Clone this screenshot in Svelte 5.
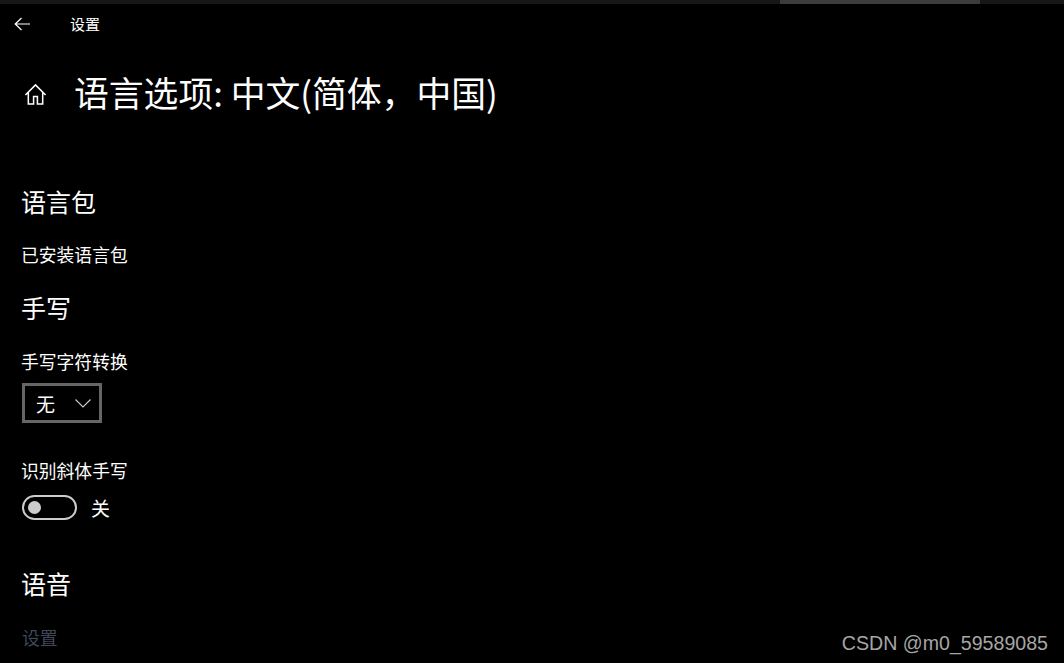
<script>
  let handwritingOn = false;
</script>

<div class="page">
  <div class="scrollbar"><div class="thumb"></div></div>

  <header class="titlebar">
    <svg class="back" viewBox="0 0 16 14" aria-hidden="true">
      <path d="M7.5 1 1.2 7l6.3 6M1.2 7H16" />
    </svg>
    <span class="app-name">设置</span>
  </header>

  <div class="page-head">
    <svg class="home" viewBox="0 0 24 24" aria-hidden="true">
      <path d="M1.5 12.5 12 2l10.5 10.5M4.5 10v12h5.5v-8h4v8h5.5V10" />
    </svg>
    <h1>语言选项: 中文(简体，中国)</h1>
  </div>

  <main class="content">
    <section class="pack">
      <h2>语言包</h2>
      <p class="label">已安装语言包</p>
    </section>

    <section class="handwriting">
      <h2>手写</h2>
      <p class="label">手写字符转换</p>
      <div class="select">
        <span>无</span>
        <svg class="chevron" viewBox="0 0 16 9" aria-hidden="true">
          <polyline points="0.5,0.5 8,8 15.5,0.5" />
        </svg>
      </div>
      <p class="label italic-label">识别斜体手写</p>
      <div class="toggle-row">
        <div class="toggle" class:on={handwritingOn}><div class="knob"></div></div>
        <span>关</span>
      </div>
    </section>

    <section class="speech">
      <h2>语音</h2>
      <p class="label link">设置</p>
    </section>
  </main>

  <div class="watermark">CSDN @m0_59589085</div>
</div>

<style>
  :global(body) {
    margin: 0;
    background: #000;
  }

  .page {
    position: relative;
    height: 663px;
    overflow: hidden;
    background: #000;
    color: #fff;
    font-family: "Noto Sans CJK SC", "Liberation Sans", sans-serif;
  }

  .scrollbar {
    height: 4px;
    background: #171717;
    display: flex;
    padding-left: 780px;
  }
  .thumb {
    width: 200px;
    background: #3c3c3c;
  }

  .titlebar {
    display: flex;
    align-items: center;
    height: 40px;
    padding-left: 14px;
  }
  .back {
    width: 16px;
    height: 14px;
    fill: none;
    stroke: #fff;
    stroke-width: 1.2;
  }
  .app-name {
    margin-left: 40px;
    font-size: 15px;
    line-height: 40px;
  }

  .page-head {
    display: flex;
    align-items: center;
    height: 62px;
    margin-top: 19px;
    padding-left: 24px;
  }
  .home {
    width: 23px;
    height: 23px;
    fill: none;
    stroke: #fff;
    stroke-width: 1.6;
  }
  h1 {
    margin: 0 0 4px 27px;
    font-size: 34.8px;
    font-weight: 400;
    line-height: 58px;
    white-space: nowrap;
  }

  .content {
    padding: 0 0 0 21px;
  }

  h2 {
    margin: 0;
    font-size: 25px;
    font-weight: 400;
    line-height: 34px;
  }
  .label {
    margin: 0;
    font-size: 17.8px;
    line-height: 24px;
    white-space: nowrap;
  }

  .pack {
    padding-top: 59px;
  }
  .pack .label {
    margin-top: 24px;
  }

  .handwriting {
    padding-top: 24px;
  }
  .handwriting > .label {
    margin-top: 25px;
  }

  .select {
    box-sizing: border-box;
    display: flex;
    align-items: center;
    justify-content: space-between;
    width: 80px;
    height: 40px;
    margin: 10px 0 0 1px;
    padding: 0 8px 0 11px;
    border: 3px solid #666;
    font-size: 19px;
  }
  .chevron {
    width: 16px;
    height: 9px;
    fill: none;
    stroke: #ccc;
    stroke-width: 1.1;
  }

  .handwriting > .italic-label {
    margin-top: 35px;
  }

  .toggle-row {
    display: flex;
    align-items: center;
    gap: 14px;
    margin: 12px 0 0 1px;
    font-size: 19px;
  }
  .toggle {
    box-sizing: border-box;
    display: flex;
    align-items: center;
    width: 55px;
    height: 25px;
    padding-left: 4px;
    border: 2.5px solid #ccc;
    border-radius: 13px;
  }
  .knob {
    width: 13px;
    height: 13px;
    border-radius: 50%;
    background: #ccc;
  }

  .speech {
    padding-top: 45px;
  }
  .speech .label {
    margin-top: 25px;
    padding-left: 1px;
  }
  .link {
    color: #3f4759;
  }

  .watermark {
    position: absolute;
    right: 16px;
    bottom: 8px;
    font-family: "Liberation Sans", sans-serif;
    font-size: 19.6px;
    line-height: 24px;
    color: #a6a6a6;
  }
</style>
